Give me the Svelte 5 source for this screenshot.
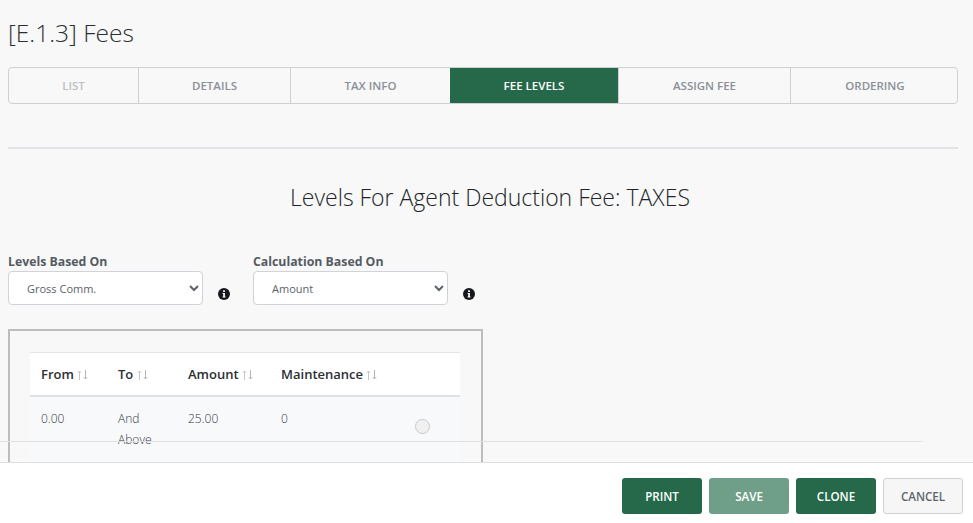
<script>
  const tabs = ['LIST', 'DETAILS', 'TAX INFO', 'FEE LEVELS', 'ASSIGN FEE', 'ORDERING'];
  const columns = [
    { name: 'From', width: 77 },
    { name: 'To', width: 70 },
    { name: 'Amount', width: 93 },
    { name: 'Maintenance', width: 128 }
  ];
  const row = ['0.00', 'And Above', '25.00', '0'];
  const selects = [
    { label: 'Levels Based On', value: 'Gross Comm.' },
    { label: 'Calculation Based On', value: 'Amount' }
  ];
</script>

<div class="page">
  <h1>[E.1.3] Fees</h1>

  <nav class="tabs">
    {#each tabs as tab, i}
      <div class="tab" class:muted={i === 0} class:active={i === 3}>{tab}</div>
    {/each}
  </nav>

  <hr class="rule" />

  <h2>Levels For Agent Deduction Fee: TAXES</h2>

  <div class="filters">
    {#each selects as s}
      <div class="filter">
        <div class="field">
          <label for={s.label}>{s.label}</label>
          <select id={s.label}>
            <option>{s.value}</option>
          </select>
        </div>
        <svg class="info" viewBox="0 0 12 12" width="12" height="12">
          <circle cx="6" cy="6" r="6" fill="#16181b" />
          <rect x="5.1" y="2.3" width="1.8" height="1.7" fill="#fff" />
          <path d="M4.6 5h2.3v3.6h.6v.9H4.6v-.9h.6V5.9h-.6z" fill="#fff" />
        </svg>
      </div>
    {/each}
  </div>

  <div class="box">
    <table>
      <thead>
        <tr>
          {#each columns as c}
            <th style="width: {c.width}px">
              {c.name}
              <svg class="sort" viewBox="0 0 11 10" width="11" height="10" fill="none">
                <path d="M2.5 10V1M.8 2.8 2.5 1l1.7 1.8" stroke="#c4c7ca" />
                <path d="M8.5 0v9M6.8 7.2 8.5 9l1.7-1.8" stroke="#b0b4b8" />
              </svg>
            </th>
          {/each}
          <th></th>
        </tr>
      </thead>
      <tbody>
        <tr>
          {#each row as cell}
            <td>{cell}</td>
          {/each}
          <td class="radio-cell"><span class="radio"></span></td>
        </tr>
      </tbody>
    </table>
  </div>

  <div class="overlay-line"></div>

  <footer>
    <button class="green">PRINT</button>
    <button class="green faded">SAVE</button>
    <button class="green">CLONE</button>
    <button class="cancel">CANCEL</button>
  </footer>
</div>

<style>
  :global(body) {
    margin: 0;
    background: #f8f8f8;
    overflow: hidden;
  }
  .page {
    height: 523px;
    overflow: hidden;
    padding: 0 15px 0 8px;
    box-sizing: border-box;
    font-family: "Open Sans", sans-serif;
    color: #212529;
    position: relative;
  }
  h1 {
    margin: 0;
    padding-top: 16px;
    height: 67px;
    box-sizing: border-box;
    font-size: 24.5px;
    line-height: 34px;
    font-weight: 300;
    color: #2b2f33;
  }
  .tabs {
    display: grid;
    grid-template-columns: 129px 152px 160px 168px 172px 169px;
    height: 37px;
    box-sizing: border-box;
    border: 1px solid #ced0d2;
    border-radius: 4px;
  }
  .tab {
    display: flex;
    align-items: center;
    justify-content: center;
    border-left: 1px solid #ced0d2;
    font-size: 11.5px;
    font-weight: 600;
    color: #8a9097;
  }
  .tab:first-child {
    border-left: 0;
  }
  .tab.muted {
    color: #bcc0c4;
  }
  .tab.active {
    background: #25694a;
    color: #fff;
    border-left: 0;
  }
  .rule {
    margin: 43px 0 0;
    border: 0;
    border-top: 2px solid #e1e3e6;
  }
  h2 {
    margin: 0;
    padding: 32px 0 0 14px;
    font-size: 23px;
    line-height: 32px;
    font-weight: 300;
    text-align: center;
    color: #212529;
  }
  .filters {
    display: flex;
    gap: 23px;
    margin-top: 41px;
  }
  .filter {
    display: flex;
    align-items: flex-end;
    gap: 15px;
  }
  .field {
    display: flex;
    flex-direction: column;
    width: 195px;
  }
  label {
    font-size: 12.3px;
    line-height: 16px;
    font-weight: 700;
    color: #555b63;
    margin-bottom: 1px;
    white-space: nowrap;
  }
  select {
    height: 34px;
    padding: 0 14px;
    font-family: inherit;
    font-size: 11px;
    color: #5c6269;
    background: #fff;
    border: 1px solid #cfd4da;
    border-radius: 4px;
  }
  .info {
    margin-bottom: 5px;
  }
  .box {
    margin-top: 24px;
    width: 475px;
    height: 200px;
    box-sizing: border-box;
    border: 2px solid #bdbdbd;
    padding: 21px 20px 0;
  }
  table {
    width: 430px;
    border-collapse: collapse;
    table-layout: fixed;
    font-size: 12px;
  }
  thead tr {
    background: #fff;
  }
  th {
    height: 43px;
    box-sizing: border-box;
    text-align: left;
    padding: 0 0 0 11px;
    font-size: 13px;
    font-weight: 600;
    color: #2b2f33;
    border-top: 1px solid #e3e5e8;
    border-bottom: 2px solid #dee2e6;
    white-space: nowrap;
  }
  .sort {
    vertical-align: -1px;
  }
  tbody tr {
    background: #f8f9fb;
  }
  td {
    height: 63px;
    vertical-align: top;
    padding: 11px 11px 0;
    line-height: 21px;
    font-weight: 300;
    color: #33383d;
  }
  td:nth-child(2) {
    padding-right: 20px;
  }
  .radio-cell {
    padding: 22px 0 0 17px;
  }
  .radio {
    display: block;
    width: 13px;
    height: 13px;
    border: 1px solid #c6c8ca;
    border-radius: 50%;
    background: #f1f1f1;
  }
  .overlay-line {
    position: absolute;
    left: 0;
    top: 441px;
    width: 922px;
    border-top: 1px solid #dfe1e4;
  }
  footer {
    position: absolute;
    left: 0;
    right: 0;
    bottom: 0;
    height: 61px;
    box-sizing: border-box;
    border-top: 1px solid #dedfe1;
    background: #fff;
    display: flex;
    justify-content: flex-end;
    gap: 7px;
    padding: 15px 10px 0 0;
  }
  button {
    width: 80px;
    height: 36px;
    border-radius: 3px;
    font-family: inherit;
    font-size: 11.6px;
    font-weight: 600;
    padding: 0;
  }
  .green {
    background: #25694a;
    border: 0;
    color: #fff;
  }
  .faded {
    background: #6f9f88;
  }
  .cancel {
    background: #f6f6f7;
    border: 1px solid #cfd1d4;
    color: #5f656d;
  }
</style>
